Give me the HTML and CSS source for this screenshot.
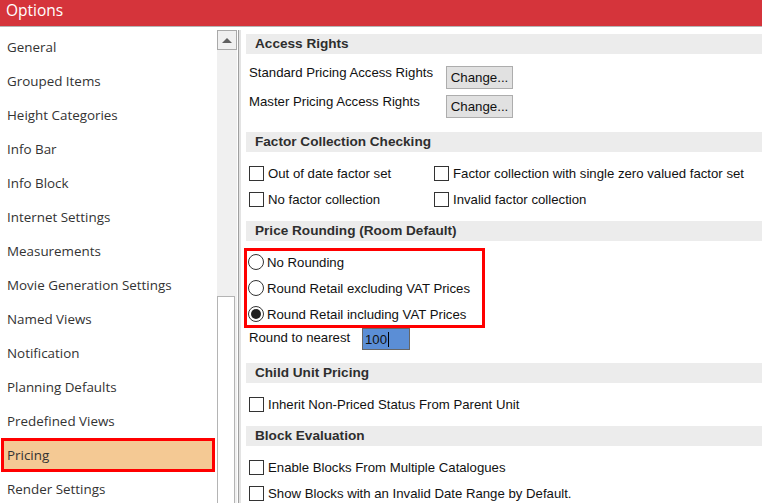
FILE: index.html
```html
<!DOCTYPE html>
<html lang="en">
<head>
    <meta charset="UTF-8">
    <title>Options</title>
    <link rel="stylesheet" href="styles.css">
</head>
<body>
    <div class="titlebar">Options</div>

    <div class="window">
        <div class="sidebar">
            <ul class="menu">
                <li>General</li>
                <li>Grouped Items</li>
                <li>Height Categories</li>
                <li>Info Bar</li>
                <li>Info Block</li>
                <li>Internet Settings</li>
                <li>Measurements</li>
                <li>Movie Generation Settings</li>
                <li>Named Views</li>
                <li>Notification</li>
                <li>Planning Defaults</li>
                <li>Predefined Views</li>
                <li class="selected">Pricing</li>
                <li>Render Settings</li>
            </ul>
            <div class="scrollbar">
                <div class="scroll-btn"><span class="arrow-up"></span></div>
                <div class="scroll-track"></div>
                <div class="scroll-thumb"></div>
            </div>
        </div>

        <div class="content">
            <div class="section">
                <div class="section-title">Access Rights</div>
                <div class="section-body access">
                    <div class="access-row">
                        <span class="access-label">Standard Pricing Access Rights</span>
                        <button type="button" class="btn">Change...</button>
                    </div>
                    <div class="access-row">
                        <span class="access-label">Master Pricing Access Rights</span>
                        <button type="button" class="btn">Change...</button>
                    </div>
                </div>
            </div>

            <div class="section">
                <div class="section-title">Factor Collection Checking</div>
                <div class="section-body check-grid">
                    <label class="check"><span class="box"></span>Out of date factor set</label>
                    <label class="check"><span class="box"></span>Factor collection with single zero valued factor set</label>
                    <label class="check"><span class="box"></span>No factor collection</label>
                    <label class="check"><span class="box"></span>Invalid factor collection</label>
                </div>
            </div>

            <div class="section">
                <div class="section-title">Price Rounding (Room Default)</div>
                <div class="highlight">
                    <label class="radio"><span class="circle"></span>No Rounding</label>
                    <label class="radio"><span class="circle"></span>Round Retail excluding VAT Prices</label>
                    <label class="radio"><span class="circle checked"></span>Round Retail including VAT Prices</label>
                </div>
                <div class="nearest-row">
                    <span class="nearest-label">Round to nearest</span>
                    <span class="nearest-input">100<span class="caret"></span></span>
                </div>
            </div>

            <div class="section">
                <div class="section-title">Child Unit Pricing</div>
                <div class="section-body">
                    <label class="check"><span class="box"></span>Inherit Non-Priced Status From Parent Unit</label>
                </div>
            </div>

            <div class="section">
                <div class="section-title">Block Evaluation</div>
                <div class="section-body">
                    <label class="check"><span class="box"></span>Enable Blocks From Multiple Catalogues</label>
                    <label class="check"><span class="box"></span>Show Blocks with an Invalid Date Range by Default.</label>
                </div>
            </div>
        </div>
    </div>
</body>
</html>
```

FILE: styles.css
```css
body {
    margin: 0;
    font-family: "Liberation Sans", Arial, sans-serif;
    font-size: 13.2px;
    color: #111;
    background-color: #fff;
    overflow: hidden;
}
.titlebar {
    background-color: #d5343b;
    color: #fff;
    font-family: "Open Sans", "Noto Sans", sans-serif;
    font-size: 15.5px;
    height: 27px;
    line-height: 21px;
    padding-left: 6px;
    box-sizing: border-box;
    border-bottom: 1px solid #b5b5b5;
}
.window {
    display: flex;
    height: 476px;
    padding-top: 3px;
    box-sizing: border-box;
}
.sidebar {
    width: 238px;
    display: flex;
    border-right: 1px solid #a0a0a0;
    box-shadow: 2px 0 0 #e3e3e3;
    margin-right: 2px;
}
.menu {
    list-style: none;
    margin: 0;
    padding: 0;
    width: 217px;
    font-family: "Open Sans", "Noto Sans", sans-serif;
    font-size: 13.4px;
    color: #333;
}
.menu li {
    height: 34px;
    line-height: 34px;
    padding-left: 7px;
    box-sizing: border-box;
}
.menu li.selected {
    background-color: #f4c994;
    border: 3px solid #f00;
    margin: 0 2px 0 1px;
    padding-left: 3px;
    line-height: 28px;
}
.scrollbar {
    width: 20px;
    background-color: #f0f0f0;
    display: flex;
    flex-direction: column;
}
.scroll-btn {
    height: 20px;
    border: 1px solid #a9a9a9;
    box-sizing: border-box;
    background-color: #f0f0f0;
    display: flex;
    align-items: center;
    justify-content: center;
}
.arrow-up {
    width: 0;
    height: 0;
    border-left: 5px solid transparent;
    border-right: 5px solid transparent;
    border-bottom: 5px solid #606060;
}
.scroll-track {
    height: 246px;
}
.scroll-thumb {
    flex: 1;
    background-color: #fff;
    border: 1px solid #b4b4b4;
    border-bottom: none;
    margin: 0 2px 0 0;
}
.content {
    flex: 1;
    padding-left: 5px;
    padding-top: 4px;
}
.section-title {
    background-color: #ececec;
    font-weight: bold;
    font-size: 13.6px;
    color: #2e2e2e;
    height: 20px;
    line-height: 20px;
    padding-left: 9px;
}
.section-body {
    padding: 8px 0 9px 3px;
}
.section-body.access {
    padding-bottom: 12px;
}
.access-row {
    display: flex;
    align-items: flex-start;
    height: 29px;
}
.access-label {
    width: 197px;
    line-height: 16px;
    margin-top: 3px;
}
.btn {
    font-family: "Liberation Sans", Arial, sans-serif;
    font-size: 13.3px;
    width: 67px;
    height: 23px;
    padding: 0;
    margin-top: 4px;
    background-color: #e1e1e1;
    border: 1px solid #adadad;
    color: #111;
}
.check-grid {
    display: grid;
    grid-template-columns: 185px auto;
}
.check {
    display: flex;
    align-items: center;
    height: 26px;
}
.box {
    width: 13px;
    height: 13px;
    border: 1px solid #333;
    background-color: #fff;
    margin-right: 4px;
    flex-shrink: 0;
}
.highlight {
    width: 234px;
    height: 74px;
    border: 3px solid #f00;
    margin: 7px 0 0 -2px;
    padding-left: 1px;
    display: flex;
    flex-direction: column;
    gap: 4px;
}
.radio {
    display: flex;
    align-items: center;
    height: 22px;
}
.circle {
    width: 14px;
    height: 14px;
    border: 1px solid #333;
    border-radius: 50%;
    background-color: #fff;
    margin-right: 3px;
    display: flex;
    align-items: center;
    justify-content: center;
}
.circle.checked::after {
    content: "";
    width: 10px;
    height: 10px;
    border-radius: 50%;
    background-color: #222;
}
.nearest-row {
    display: flex;
    align-items: flex-start;
    height: 22px;
    padding: 0 0 13px 3px;
}
.nearest-label {
    width: 113px;
    line-height: 16px;
    margin-top: 2px;
}
.nearest-input {
    width: 48px;
    height: 22px;
    background-color: #5b8ed6;
    border: 1px solid #666;
    box-sizing: border-box;
    padding-left: 2px;
    color: #111;
    display: flex;
    align-items: center;
}
.caret {
    width: 1px;
    height: 15px;
    background-color: #000;
    margin-left: 1px;
}
```
